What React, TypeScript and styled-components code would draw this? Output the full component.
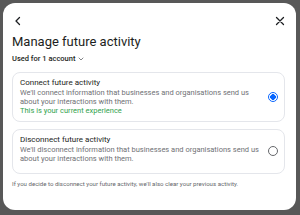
import styled, { createGlobalStyle } from 'styled-components'

const GlobalStyle = createGlobalStyle`
  html, body {
    margin: 0;
    padding: 0;
  }
  body {
    background: #585858;
    font-family: Roboto, "Liberation Sans", sans-serif;
    -webkit-font-smoothing: antialiased;
  }
`

const options = [
  {
    title: 'Connect future activity',
    text: "We'll connect information that businesses and organisations send us about your interactions with them.",
    note: 'This is your current experience',
    checked: true,
  },
  {
    title: 'Disconnect future activity',
    text: "We'll disconnect information that businesses and organisations send us about your interactions with them.",
    checked: false,
  },
]

export default function App() {
  return (
    <>
      <GlobalStyle />
      <Overlay>
        <Modal>
          <Header>
            <IconButton aria-label="Back">
              <svg width="10" height="10" viewBox="0 0 10 10">
                <path d="M6.5 1.5 L3 5 L6.5 8.5" fill="none" stroke="#1c1e21" strokeWidth="1.3" strokeLinecap="round" strokeLinejoin="round" />
              </svg>
            </IconButton>
            <IconButton aria-label="Close">
              <svg width="10" height="10" viewBox="0 0 10 10">
                <path d="M1.5 1.5 L8.5 8.5 M8.5 1.5 L1.5 8.5" fill="none" stroke="#1c1e21" strokeWidth="1.3" strokeLinecap="round" />
              </svg>
            </IconButton>
          </Header>

          <Title>Manage future activity</Title>
          <Account>
            Used for 1 account
            <svg width="6" height="6" viewBox="0 0 6 6">
              <path d="M1 2 L3 4 L5 2" fill="none" stroke="#65676b" strokeWidth="0.8" strokeLinecap="round" />
            </svg>
          </Account>

          <Options>
            {options.map(o => (
              <Card key={o.title}>
                <CardBody>
                  <CardTitle>{o.title}</CardTitle>
                  <CardText>{o.text}</CardText>
                  {o.note && <Note>{o.note}</Note>}
                </CardBody>
                <Radio checked={o.checked} />
              </Card>
            ))}
          </Options>

          <Footer>If you decide to disconnect your future activity, we'll also clear your previous activity.</Footer>
        </Modal>
      </Overlay>
    </>
  )
}

const Overlay = styled.div`
  width: 300px;
  height: 215px;
  padding: 3px;
  box-sizing: border-box;
`

const Modal = styled.div`
  width: 293px;
  height: 207px;
  box-sizing: border-box;
  background: #fff;
  border-radius: 12px;
  padding: 10px 11px 0 9px;
  display: flex;
  flex-direction: column;
`

const Header = styled.div`
  height: 16px;
  padding-left: 1px;
  display: flex;
  align-items: center;
  justify-content: space-between;
`

const IconButton = styled.div`
  width: 10px;
  height: 10px;
  display: flex;
`

const Title = styled.div`
  margin-top: 5px;
  font-size: 13px;
  line-height: 16px;
  color: #1c1e21;
`

const Account = styled.div`
  margin-top: 4px;
  display: flex;
  align-items: center;
  gap: 3px;
  font-size: 7.5px;
  line-height: 10px;
  font-weight: 500;
  color: #1c1e21;
`

const Options = styled.div`
  margin-top: 8px;
  display: flex;
  flex-direction: column;
  gap: 7px;
`

const Card = styled.div`
  min-height: 45px;
  box-sizing: border-box;
  border: 1px solid #e4e6eb;
  border-radius: 8px;
  padding: 5px 6px 6px 7px;
  display: flex;
  align-items: center;
  gap: 7px;
`

const CardBody = styled.div`
  flex: 1;
  align-self: flex-start;
`

const CardTitle = styled.div`
  font-size: 8px;
  line-height: 10px;
  color: #1c1e21;
`

const CardText = styled.div`
  font-size: 7.5px;
  line-height: 9px;
  color: #6f7175;
`

const Note = styled.div`
  font-size: 7.5px;
  line-height: 9px;
  color: #31a24c;
`

const Radio = styled.div<{ checked: boolean }>`
  width: 10px;
  height: 10px;
  box-sizing: border-box;
  border-radius: 50%;
  flex-shrink: 0;
  border: 1.3px solid ${p => (p.checked ? '#0866ff' : '#65676b')};
  background: ${p => (p.checked ? 'radial-gradient(circle, #0866ff 0 2.6px, #fff 3px)' : '#fff')};
`

const Footer = styled.div`
  margin-top: 5px;
  font-size: 6.1px;
  line-height: 9px;
  color: #65676b;
`
